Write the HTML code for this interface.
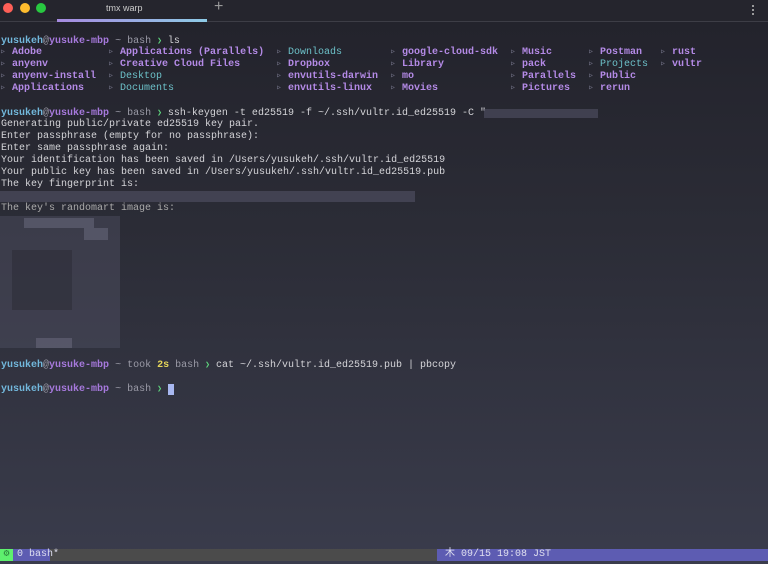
<!DOCTYPE html><html><head><meta charset="utf-8"><style>
*{margin:0;padding:0;box-sizing:border-box}
html,body{width:768px;height:564px;overflow:hidden}
body{background:linear-gradient(#22222b 0%,#2b2c36 40%,#3a3c4c 100%);font-family:"Liberation Mono","Noto Sans CJK JP",monospace;font-size:10px;color:#d4d4d8;position:relative}
.tb{position:absolute;left:0;top:0;width:768px;height:22px;background:#25252d;border-bottom:1px solid #3d3d46}
.dot{position:absolute;top:3px;width:10px;height:10px;border-radius:50%}
.l{position:absolute;left:1px;white-space:pre;line-height:12px;height:12px}
.u{color:#72b8dc;font-weight:bold}.h{color:#a679dc;font-weight:bold}.g{color:#9a9aa6}.ar{color:#5fd77e;font-family:"DejaVu Sans Mono",monospace;font-size:8px}.y{color:#e6d65a;font-weight:bold}
.d{color:#b48ae6;font-weight:bold}.c{color:#6cc0c8}.i{color:#6d6d80}
.it{position:absolute;white-space:pre;line-height:12px}
.blur{position:absolute;background:#55556a;opacity:.55}
.sb span{position:absolute;top:0;height:12px}
</style></head><body>
<div class="tb">
<div class="dot" style="left:3px;background:#fe5f57"></div>
<div class="dot" style="left:20px;background:#febc2e"></div>
<div class="dot" style="left:36px;background:#28c840"></div>
<div style="position:absolute;left:106px;top:3px;font-family:'Liberation Sans',sans-serif;font-size:9px;color:#ccc">tmx warp</div>
<div style="position:absolute;left:214px;top:-2px;font-family:'Liberation Sans',sans-serif;font-size:16px;color:#999">+</div>
<div style="position:absolute;left:57px;top:19px;width:150px;height:3px;background:linear-gradient(90deg,#a68ae0,#8ecbe6)"></div>
<div style="position:absolute;left:752px;top:4px;width:2px;height:11px;background:radial-gradient(circle,#aaa 45%,transparent 50%) 0 0/2px 4px"></div>
</div>
<div class="l" style="top:35px"><span class="u">yusukeh</span><span class="g">@</span><span class="h">yusuke-mbp</span> <span class="g">~ bash</span> <span class="ar">❯</span> ls</div>
<div style="position:absolute;left:0;top:47px">
<div class="it" style="left:0;top:0"><span class="i">▹</span> <span class="d">Adobe</span>
<span class="i">▹</span> <span class="d">anyenv</span>
<span class="i">▹</span> <span class="d">anyenv-install</span>
<span class="i">▹</span> <span class="d">Applications</span></div>
<div class="it" style="left:108px;top:0"><span class="i">▹</span> <span class="d">Applications (Parallels)</span>
<span class="i">▹</span> <span class="d">Creative Cloud Files</span>
<span class="i">▹</span> <span class="c">Desktop</span>
<span class="i">▹</span> <span class="c">Documents</span></div>
<div class="it" style="left:276px;top:0"><span class="i">▹</span> <span class="c">Downloads</span>
<span class="i">▹</span> <span class="d">Dropbox</span>
<span class="i">▹</span> <span class="d">envutils-darwin</span>
<span class="i">▹</span> <span class="d">envutils-linux</span></div>
<div class="it" style="left:390px;top:0"><span class="i">▹</span> <span class="d">google-cloud-sdk</span>
<span class="i">▹</span> <span class="d">Library</span>
<span class="i">▹</span> <span class="d">mo</span>
<span class="i">▹</span> <span class="d">Movies</span></div>
<div class="it" style="left:510px;top:0"><span class="i">▹</span> <span class="d">Music</span>
<span class="i">▹</span> <span class="d">pack</span>
<span class="i">▹</span> <span class="d">Parallels</span>
<span class="i">▹</span> <span class="d">Pictures</span></div>
<div class="it" style="left:588px;top:0"><span class="i">▹</span> <span class="d">Postman</span>
<span class="i">▹</span> <span class="c">Projects</span>
<span class="i">▹</span> <span class="d">Public</span>
<span class="i">▹</span> <span class="d">rerun</span></div>
<div class="it" style="left:660px;top:0"><span class="i">▹</span> <span class="d">rust</span>
<span class="i">▹</span> <span class="d">vultr</span></div>
</div>
<div class="l" style="top:107px"><span class="u">yusukeh</span><span class="g">@</span><span class="h">yusuke-mbp</span> <span class="g">~ bash</span> <span class="ar">❯</span> ssh-keygen -t ed25519 -f ~/.ssh/vultr.id_ed25519 -C "</div>
<div class="blur" style="left:484px;top:109px;width:114px;height:9px"></div>
<div class="l" style="top:119px">Generating public/private ed25519 key pair.</div>
<div class="l" style="top:131px">Enter passphrase (empty for no passphrase):</div>
<div class="l" style="top:143px">Enter same passphrase again:</div>
<div class="l" style="top:155px">Your identification has been saved in /Users/yusukeh/.ssh/vultr.id_ed25519</div>
<div class="l" style="top:167px">Your public key has been saved in /Users/yusukeh/.ssh/vultr.id_ed25519.pub</div>
<div class="l" style="top:179px">The key fingerprint is:</div>
<div class="blur" style="left:0;top:191px;width:415px;height:11px"></div>
<div class="l" style="top:203px;color:#aaa">The key's randomart image is:</div>
<div class="blur" style="left:0;top:216px;width:120px;height:132px;opacity:.4"></div>
<div class="blur" style="left:24px;top:218px;width:70px;height:10px;background:#6a6a7e"></div>
<div class="blur" style="left:84px;top:228px;width:24px;height:12px;background:#6a6a7e"></div>
<div class="blur" style="left:12px;top:250px;width:60px;height:60px;background:#2b2b36"></div>
<div class="blur" style="left:36px;top:338px;width:36px;height:10px;background:#6a6a7e"></div>
<div class="l" style="top:359px"><span class="u">yusukeh</span><span class="g">@</span><span class="h">yusuke-mbp</span> <span class="g">~ took</span> <span class="y">2s</span> <span class="g">bash</span> <span class="ar">❯</span> cat ~/.ssh/vultr.id_ed25519.pub | pbcopy</div>
<div class="l" style="top:383px"><span class="u">yusukeh</span><span class="g">@</span><span class="h">yusuke-mbp</span> <span class="g">~ bash</span> <span class="ar">❯</span> <span style="background:#a8b8f0">&nbsp;</span></div>
<div class="sb" style="position:absolute;left:0;top:549px;width:768px;height:12px;background:#4b4b4b;line-height:12px;white-space:nowrap"><span style="left:0;width:13px;background:#5ef06e;color:#2a7a3a;text-align:center">⚙</span><span style="left:13px;width:37px;background:#5d5cb2;color:#dedef0;padding-left:4px">0 bash*</span><span style="left:437px;width:331px;background:#5d5cb2;color:#e0e0f0;padding-left:8px">木 09/15 19:08 JST</span></div>
<div style="position:absolute;left:0;top:561px;width:768px;height:3px;background:#3a3c4c"></div>
</body></html>
